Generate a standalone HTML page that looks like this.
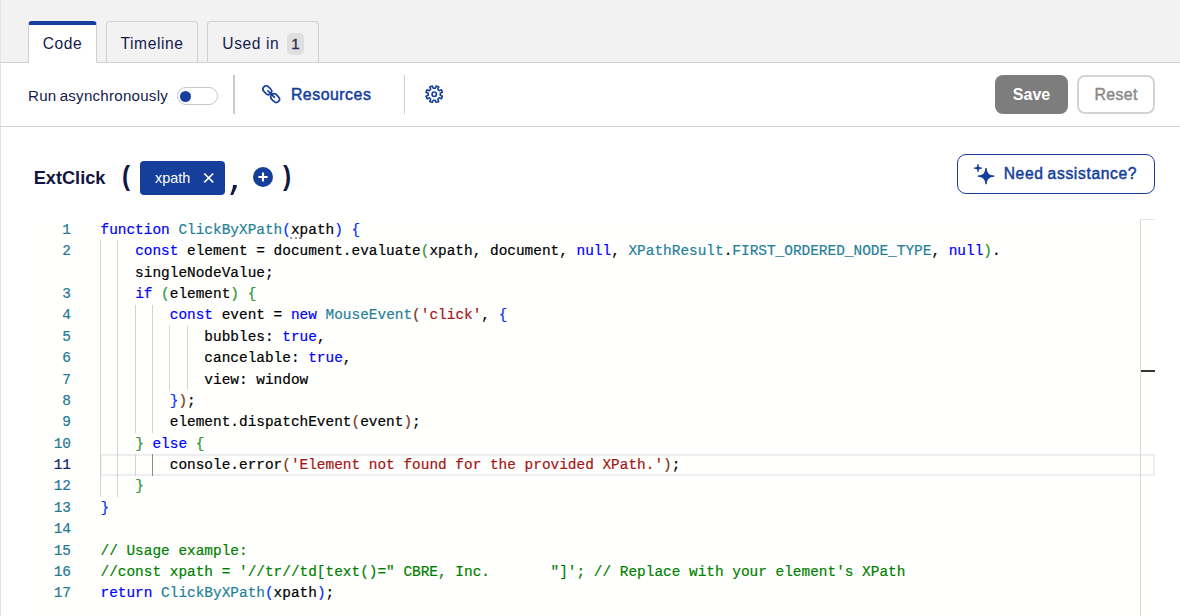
<!DOCTYPE html>
<html>
<head>
<meta charset="utf-8">
<title>ExtClick</title>
<style>
*{box-sizing:border-box;margin:0;padding:0}
html,body{width:1180px;height:616px;overflow:hidden;background:#fff;font-family:"Liberation Sans",sans-serif;color:#151a4b}
.abs{position:absolute}
#topbg{left:0;top:0;width:1180px;height:62px;background:#f2f2f2}
#leftstrip{left:0;top:0;width:1px;height:616px;background:#e3e3e3}
#tabline{left:0;top:62px;width:1180px;height:1px;background:#cfcfcf}
.tab{top:21px;height:42px;border:1px solid #d0d0d0;border-bottom:none;border-radius:4px 4px 0 0;background:#f2f2f2;font-size:15.6px;letter-spacing:.58px;line-height:20px;padding-top:11.8px;text-align:center;white-space:nowrap}
#tab1{left:28px;width:69px;background:#fff;border-top:4px solid #163f9b;padding-top:8.8px;height:42px}
#tab2{left:106px;width:92px;height:41px}
#tab3{left:207px;width:112px;height:41px;text-align:left;padding-left:14.3px}
#badge{position:absolute;left:79px;top:11px;background:#dfdfdf;border-radius:5px;width:17px;height:22px;line-height:22px;font-size:15.2px;letter-spacing:0;text-align:center;color:#2a2f52;-webkit-text-stroke:.35px #2a2f52}
#toolline{left:0;top:126px;width:1180px;height:1px;background:#d4d4d4}
#runasync{left:28px;top:86px;font-size:15.1px;word-spacing:-1.2px;letter-spacing:.25px;line-height:20px;white-space:nowrap}
#toggle{left:177px;top:87px;width:41px;height:18px;border:1px solid #c8c8c8;border-radius:9px;background:#fff}
#knob{left:2px;top:3px;width:11px;height:11px;border-radius:50%;background:#163f9b}
.vdiv{top:75px;width:1px;height:39px;background:#cfcfcf}
#resources{left:290.9px;top:85.2px;font-size:15.9px;font-weight:normal;-webkit-text-stroke:.5px #163f9b;letter-spacing:.5px;color:#163f9b;line-height:20px;white-space:nowrap}
.btn{top:75px;height:39px;border-radius:8px;font-size:16px;font-weight:bold;line-height:39px;text-align:center;white-space:nowrap}
#save{left:995px;width:73px;background:#7d7d7d;color:#fff}
#reset{left:1077px;width:78px;background:#fff;border:2px solid #d3d3d3;color:#8a8a8a;line-height:35px;font-size:15.9px;font-weight:normal;-webkit-text-stroke:.45px #8a8a8a;letter-spacing:.35px;padding-left:.35px}
#fname{left:33.7px;top:166.7px;font-size:18.2px;font-weight:bold;line-height:22px;color:#12163f;white-space:nowrap}
.paren{top:155.3px;font-size:28.2px;line-height:40px;color:#12163f;font-weight:bold;transform:scaleX(.86);transform-origin:0 0}
#chip{left:140px;top:161px;width:85px;height:34px;background:#163f9b;border-radius:4px;color:#fff;font-size:14.4px;line-height:34px;padding-left:15px}
#assist{left:957px;top:154px;width:198px;height:40px;border:1px solid #163f9b;border-radius:9px;color:#163f9b;font-weight:normal;-webkit-text-stroke:.5px #163f9b;letter-spacing:.66px;word-spacing:-1px;font-size:15.6px;line-height:38px;padding-left:45.7px;background:#fff;white-space:nowrap}
#editor{left:33px;top:218px;width:1122px;height:398px;background:#fffffe}
#code{left:0;top:219px;width:1180px;font-family:"Liberation Mono",monospace;font-size:14.43px;color:#000;-webkit-text-stroke-width:.2px}
.ln{position:absolute;left:0;margin-top:0.9px;width:71px;text-align:right;color:#237893;height:21.375px;line-height:21.375px;white-space:pre}
.cl{position:absolute;left:100.5px;margin-top:0.9px;height:21.375px;line-height:21.375px;white-space:pre}
.k{color:#0000ff}.t{color:#267f99}.s{color:#a31515}.c{color:#008000}
.b1{color:#0431fa}.b2{color:#319331}.b3{color:#7b3814}
.g{position:absolute;width:1px;background:#d3d3d3}
.act{color:#0b216f}
.ga{background:#8a8a8a}
#curline{left:100px;top:454px;width:1055px;height:22px;border:2px solid #eee}
#rulerv{left:1140px;top:219px;width:1px;height:397px;background:#d8d8d8}
#rulerh{left:1140px;top:219px;width:15px;height:1px;background:#e4e4e4}
#rulerm{left:1141px;top:370px;width:14px;height:2px;background:#363636}
.hd{position:absolute;top:237.3px;width:2.6px;height:1.5px;background:#8c8c8c;border-radius:.7px}
</style>
</head>
<body>
<div class="abs" id="topbg"></div>
<div class="abs" id="tabline"></div>
<div class="abs" id="leftstrip"></div>
<div class="abs tab" id="tab1">Code</div>
<div class="abs tab" id="tab2">Timeline</div>
<div class="abs tab" id="tab3">Used in<span id="badge">1</span></div>

<div class="abs" id="runasync">Run asynchronously</div>
<div class="abs" id="toggle"><div class="abs" id="knob"></div></div>
<div class="abs vdiv" style="left:233px;width:2px;background:#cbcbcb"></div>
<div class="abs" id="resources">Resources</div>
<div class="abs vdiv" style="left:404px"></div>
<div class="abs btn" id="save">Save</div>
<div class="abs btn" id="reset">Reset</div>
<div class="abs" id="toolline"></div>

<div class="abs" id="fname">ExtClick</div>
<div class="abs" id="chip">xpath</div>
<div class="abs" id="assist">Need assistance?</div>

<svg class="abs" style="left:262px;top:85px" width="19" height="19" viewBox="0 0 19 19" fill="none" stroke="#163f9b" stroke-width="1.7" stroke-linecap="round"><g transform="rotate(45 9.2 9.15)"><rect x="-1.10" y="5.90" width="9.5" height="6.5" rx="3.25"/><rect x="10.00" y="5.90" width="9.5" height="6.5" rx="3.25"/><path d="M4.6 9.15H13.799999999999999"/></g></svg>
<svg class="abs" style="left:424.6px;top:84.7px" width="18.5" height="18.5" viewBox="0 0 18.5 18.5" fill="none" stroke="#163f9b" stroke-width="1.6" stroke-linejoin="round"><path d="M10.26 3.23 L11.15 1.02 L13.73 2.08 L12.79 4.28 L14.22 5.71 L16.42 4.77 L17.48 7.35 L15.27 8.24 L15.27 10.26 L17.48 11.15 L16.42 13.73 L14.22 12.79 L12.79 14.22 L13.73 16.42 L11.15 17.48 L10.26 15.27 L8.24 15.27 L7.35 17.48 L4.77 16.42 L5.71 14.22 L4.28 12.79 L2.08 13.73 L1.02 11.15 L3.23 10.26 L3.23 8.24 L1.02 7.35 L2.08 4.77 L4.28 5.71 L5.71 4.28 L4.77 2.08 L7.35 1.02 L8.24 3.23Z"/><circle cx="9.25" cy="9.25" r="2.2"/></svg>
<svg class="abs" style="left:972px;top:162px" width="24" height="24" viewBox="0 0 24 24" fill="#163f9b"><path d="M13.35 5.90 L14.65 5.90 Q14.68 13.43 22.20 13.45 L22.20 14.75 Q14.68 14.77 14.65 22.30 L13.35 22.30 Q13.32 14.77 5.80 14.75 L5.80 13.45 Q13.32 13.43 13.35 5.90Z"/><path d="M5.35 2.10 L6.65 2.10 Q6.07 6.03 10.00 5.45 L10.00 6.75 Q6.07 6.17 6.65 10.10 L5.35 10.10 Q5.93 6.17 2.00 6.75 L2.00 5.45 Q5.93 6.03 5.35 2.10Z"/></svg>
<svg class="abs" style="left:203px;top:172px" width="12" height="12" viewBox="0 0 12 12" fill="none" stroke="#fff" stroke-width="1.65"><path d="M1.3 1.5 L10.2 10.4 M10.2 1.5 L1.3 10.4"/></svg>
<svg class="abs" style="left:253px;top:167px" width="20" height="20" viewBox="0 0 20 20"><circle cx="10" cy="10" r="10" fill="#163f9b"/><path d="M10 5.4V14.6M5.4 10H14.6" stroke="#fff" stroke-width="2.1" fill="none"/></svg>
<div class="abs paren" style="left:121.6px">(</div>
<div class="abs paren" style="left:282.6px">)</div>
<svg class="abs" style="left:228px;top:182px" width="12" height="16" viewBox="0 0 12 16"><path d="M5 2.9H8.8L8.6 5.2L5.1 13.1H2.3L4.6 6.6Z" fill="#12163f"/></svg>
<div class="abs" id="editor"></div>
<div class="abs" id="curline"></div>
<div class="abs" id="rulerv"></div>
<div class="abs" id="rulerh"></div>
<div class="abs" id="rulerm"></div>
<div class="hd" style="left:289.8px"></div><div class="hd" style="left:294.6px"></div><div class="hd" style="left:299.3px"></div>
<div class="abs" id="code">
<div class="ln" style="top:0.0px">1</div>
<div class="cl" style="top:0.0px"><span class="k">function</span> <span class="t">ClickByXPath</span><span class="b1">(</span>xpath<span class="b1">)</span> <span class="b1">{</span></div>
<div class="ln" style="top:21.375px">2</div>
<div class="g" style="left:100px;top:21.375px;height:21.375px"></div>
<div class="g" style="left:117px;top:21.375px;height:21.375px"></div>
<div class="cl" style="top:21.375px">    <span class="k">const</span> element = document.evaluate<span class="b2">(</span>xpath, document, <span class="k">null</span>, <span class="t">XPathResult</span>.<span class="t">FIRST_ORDERED_NODE_TYPE</span>, <span class="k">null</span><span class="b2">)</span>.</div>
<div class="g" style="left:100px;top:42.75px;height:21.375px"></div>
<div class="g" style="left:117px;top:42.75px;height:21.375px"></div>
<div class="cl" style="top:42.75px">    singleNodeValue;</div>
<div class="ln" style="top:64.125px">3</div>
<div class="g" style="left:100px;top:64.125px;height:21.375px"></div>
<div class="g" style="left:117px;top:64.125px;height:21.375px"></div>
<div class="cl" style="top:64.125px">    <span class="k">if</span> <span class="b2">(</span>element<span class="b2">)</span> <span class="b2">{</span></div>
<div class="ln" style="top:85.5px">4</div>
<div class="g" style="left:100px;top:85.5px;height:21.375px"></div>
<div class="g" style="left:117px;top:85.5px;height:21.375px"></div>
<div class="g" style="left:135px;top:85.5px;height:21.375px"></div>
<div class="g" style="left:152px;top:85.5px;height:21.375px"></div>
<div class="cl" style="top:85.5px">        <span class="k">const</span> event = <span class="k">new</span> <span class="t">MouseEvent</span><span class="b3">(</span><span class="s">'click'</span>, <span class="b1">{</span></div>
<div class="ln" style="top:106.875px">5</div>
<div class="g" style="left:100px;top:106.875px;height:21.375px"></div>
<div class="g" style="left:117px;top:106.875px;height:21.375px"></div>
<div class="g" style="left:135px;top:106.875px;height:21.375px"></div>
<div class="g" style="left:152px;top:106.875px;height:21.375px"></div>
<div class="g" style="left:169px;top:106.875px;height:21.375px"></div>
<div class="g" style="left:187px;top:106.875px;height:21.375px"></div>
<div class="cl" style="top:106.875px">            bubbles: <span class="k">true</span>,</div>
<div class="ln" style="top:128.25px">6</div>
<div class="g" style="left:100px;top:128.25px;height:21.375px"></div>
<div class="g" style="left:117px;top:128.25px;height:21.375px"></div>
<div class="g" style="left:135px;top:128.25px;height:21.375px"></div>
<div class="g" style="left:152px;top:128.25px;height:21.375px"></div>
<div class="g" style="left:169px;top:128.25px;height:21.375px"></div>
<div class="g" style="left:187px;top:128.25px;height:21.375px"></div>
<div class="cl" style="top:128.25px">            cancelable: <span class="k">true</span>,</div>
<div class="ln" style="top:149.625px">7</div>
<div class="g" style="left:100px;top:149.625px;height:21.375px"></div>
<div class="g" style="left:117px;top:149.625px;height:21.375px"></div>
<div class="g" style="left:135px;top:149.625px;height:21.375px"></div>
<div class="g" style="left:152px;top:149.625px;height:21.375px"></div>
<div class="g" style="left:169px;top:149.625px;height:21.375px"></div>
<div class="g" style="left:187px;top:149.625px;height:21.375px"></div>
<div class="cl" style="top:149.625px">            view: window</div>
<div class="ln" style="top:171.0px">8</div>
<div class="g" style="left:100px;top:171.0px;height:21.375px"></div>
<div class="g" style="left:117px;top:171.0px;height:21.375px"></div>
<div class="g" style="left:135px;top:171.0px;height:21.375px"></div>
<div class="g" style="left:152px;top:171.0px;height:21.375px"></div>
<div class="cl" style="top:171.0px">        <span class="b1">}</span><span class="b3">)</span>;</div>
<div class="ln" style="top:192.375px">9</div>
<div class="g" style="left:100px;top:192.375px;height:21.375px"></div>
<div class="g" style="left:117px;top:192.375px;height:21.375px"></div>
<div class="g" style="left:135px;top:192.375px;height:21.375px"></div>
<div class="g" style="left:152px;top:192.375px;height:21.375px"></div>
<div class="cl" style="top:192.375px">        element.dispatchEvent<span class="b3">(</span>event<span class="b3">)</span>;</div>
<div class="ln" style="top:213.75px">10</div>
<div class="g" style="left:100px;top:213.75px;height:21.375px"></div>
<div class="g" style="left:117px;top:213.75px;height:21.375px"></div>
<div class="cl" style="top:213.75px">    <span class="b2">}</span> <span class="k">else</span> <span class="b2">{</span></div>
<div class="ln act" style="top:235.125px">11</div>
<div class="g" style="left:100px;top:235.125px;height:21.375px"></div>
<div class="g" style="left:117px;top:235.125px;height:21.375px"></div>
<div class="g" style="left:135px;top:235.125px;height:21.375px"></div>
<div class="g ga" style="left:152px;top:235.125px;height:21.375px"></div>
<div class="cl" style="top:235.125px">        console.error<span class="b3">(</span><span class="s">'Element not found for the provided XPath.'</span><span class="b3">)</span>;</div>
<div class="ln" style="top:256.5px">12</div>
<div class="g" style="left:100px;top:256.5px;height:21.375px"></div>
<div class="g" style="left:117px;top:256.5px;height:21.375px"></div>
<div class="cl" style="top:256.5px">    <span class="b2">}</span></div>
<div class="ln" style="top:277.875px">13</div>
<div class="cl" style="top:277.875px"><span class="b1">}</span></div>
<div class="ln" style="top:299.25px">14</div>
<div class="ln" style="top:320.625px">15</div>
<div class="cl" style="top:320.625px"><span class="c">// Usage example:</span></div>
<div class="ln" style="top:342.0px">16</div>
<div class="cl" style="top:342.0px"><span class="c">//const xpath = '//tr//td[text()=" CBRE, Inc.       "]'; // Replace with your element's XPath</span></div>
<div class="ln" style="top:363.375px">17</div>
<div class="cl" style="top:363.375px"><span class="k">return</span> <span class="t">ClickByXPath</span><span class="b1">(</span>xpath<span class="b1">)</span>;</div>
</div>
</body>
</html>
